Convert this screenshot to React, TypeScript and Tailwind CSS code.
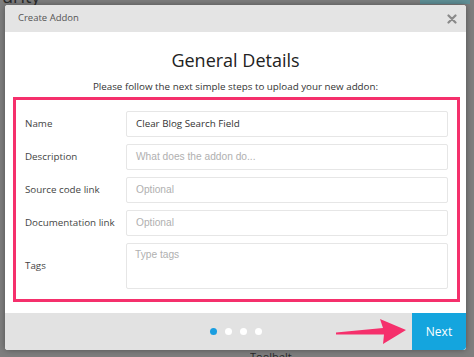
import React from 'react';

const fields = [
  { label: 'Name', value: 'Clear Blog Search Field', placeholder: '' },
  { label: 'Description', value: '', placeholder: 'What does the addon do...' },
  { label: 'Source code link', value: '', placeholder: 'Optional' },
  { label: 'Documentation link', value: '', placeholder: 'Optional' },
];

export default function App() {
  return (
    <div className="relative w-[474px] h-[357px] overflow-hidden bg-[#7e7e7e] font-['Open_Sans',sans-serif]">
      {/* dimmed page behind the modal */}
      <div className="absolute left-0 top-0 w-[60px] h-[5px] overflow-hidden">
        <div className="text-[18px] leading-[18px] -mt-[13px] pl-[2px] text-[#2a2a2a]">urity</div>
      </div>
      <div className="absolute left-[420px] top-0 w-[50px] h-[4px] bg-[#5f8f96]" />
      <div className="absolute left-[250px] top-[351px] w-[60px] h-[6px] overflow-hidden">
        <div className="text-[11px] leading-[12px] text-[#2a2a2a]">Toolbelt</div>
      </div>

      <div className="relative pl-[5px] pt-[5px]">
        <div className="w-[461px] h-[345px] flex flex-col rounded-[3px] overflow-hidden bg-white shadow-[0_0_6px_rgba(0,0,0,0.35)]">
          <div className="h-[27px] shrink-0 bg-[#e4e4e4] flex items-center justify-between pl-[13px] pr-[9px]">
            <span className="text-[9.5px] text-[#555]">Create Addon</span>
            <svg width="10" height="10" viewBox="0 0 10 10">
              <path d="M1.5 1.5 L8.5 8.5 M8.5 1.5 L1.5 8.5" stroke="#8a8a8a" strokeWidth="2.2" strokeLinecap="round" />
            </svg>
          </div>

          <div className="flex-1 flex flex-col">
            <h1 className="text-center text-[18px] leading-[26px] text-[#222] pt-[15px]">General Details</h1>
            <p className="text-center text-[9.8px] leading-[16px] text-[#333] mt-[6px]">
              Please follow the next simple steps to upload your new addon:
            </p>

            <div className="ml-[8px] mr-[6px] mt-[2px] border-[3px] border-[#f5306c] pt-[11px] pb-[10px] pl-[9px] pr-[9px] flex flex-col gap-[7px]">
              {fields.map(f => (
                <div key={f.label} className="flex items-center h-[26px]">
                  <div className="w-[101px] shrink-0 text-[9.8px] text-[#444] whitespace-nowrap">{f.label}</div>
                  <div className="flex-1 h-[26px] border border-[#e6e6e6] rounded-[2px] flex items-center px-[9px]">
                    {f.value ? (
                      <span className="text-[9.8px] text-[#333]">{f.value}</span>
                    ) : (
                      <span className="text-[#b0b0b0] font-['Liberation_Sans',sans-serif] text-[10.2px]">{f.placeholder}</span>
                    )}
                  </div>
                </div>
              ))}
              <div className="flex items-center h-[46px]">
                <div className="w-[101px] shrink-0 text-[9.8px] text-[#444]">Tags</div>
                <div className="flex-1 h-[46px] border border-[#e6e6e6] rounded-[2px] px-[8px] pt-[5px] text-[10.2px] leading-[12px] text-[#b0b0b0] font-['Liberation_Sans',sans-serif]">
                  Type tags
                </div>
              </div>
            </div>
          </div>

          <div className="relative h-[37px] shrink-0 bg-[#e2e2e2] flex items-center">
            <div className="flex-1 flex justify-center gap-[8px] pl-[54px]">
              <span className="w-[7px] h-[7px] rounded-full bg-[#1a9ee0]" />
              <span className="w-[7px] h-[7px] rounded-full bg-white" />
              <span className="w-[7px] h-[7px] rounded-full bg-white" />
              <span className="w-[7px] h-[7px] rounded-full bg-white" />
            </div>
            <svg className="absolute left-[325px] top-0" width="80" height="37" viewBox="0 0 80 37">
              <polygon points="6,19.5 53,15 50,6 76,17 53,31 54,21.5 6,21.5" fill="#f5306c" />
            </svg>
            <div className="w-[54px] h-[37px] bg-[#14a5de] text-white text-[12px] flex items-center justify-center rounded-br-[3px]">
              Next
            </div>
          </div>
        </div>
      </div>
    </div>
  );
}
